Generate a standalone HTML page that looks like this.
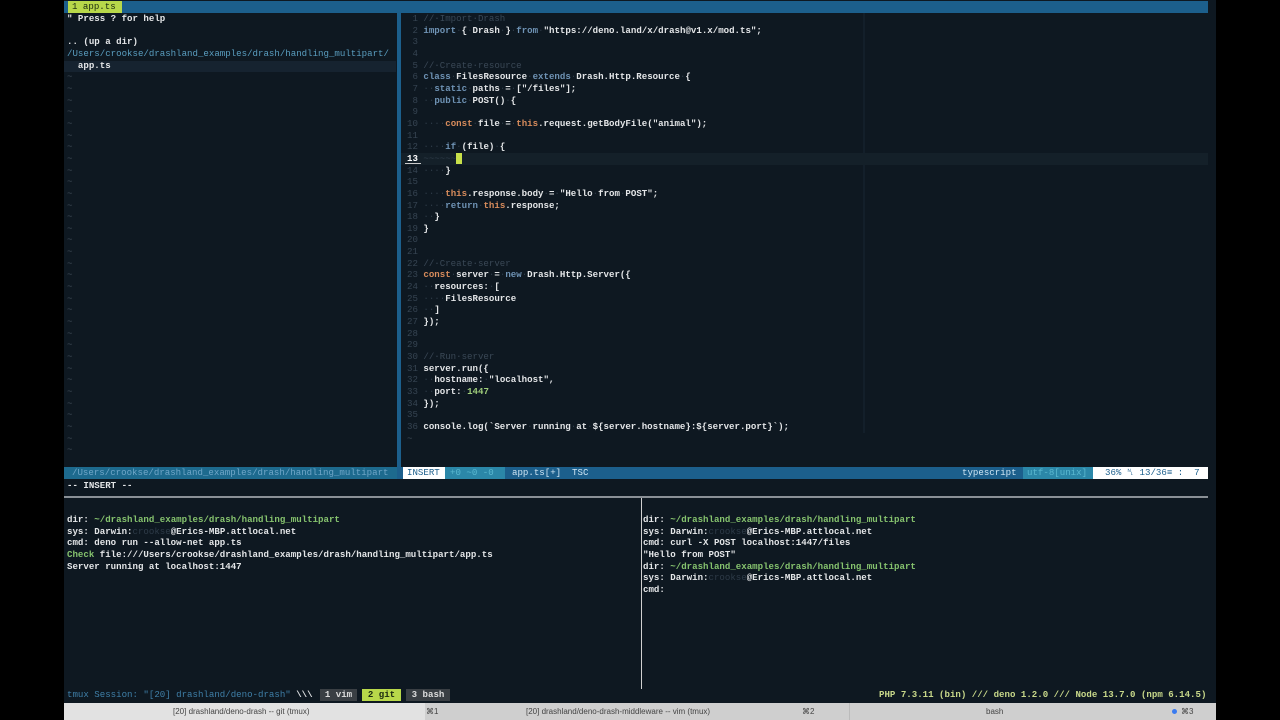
<!DOCTYPE html>
<html><head><meta charset="utf-8"><style>
body{margin:0;width:1280px;height:720px;background:#000;overflow:hidden;position:relative;font-family:"Liberation Mono",monospace;font-weight:bold;font-size:9.1px;color:#e4e6e8}
.a{position:absolute}
pre{margin:0;font:inherit;line-height:11.66px;white-space:pre;position:absolute}
.c{color:#3a4856;font-weight:normal}
.k{color:#6f93b5}
.o{color:#d88c5c}
.g{color:#9fce7b}
.n{color:#364452;font-weight:normal}
.d{color:#2e3b48;font-weight:normal}
.t{color:#3e4a55;font-weight:normal}
.gr{color:#86c36e}
.bl{color:#5a9ec0}
</style></head><body>
<div class="a" style="left:64px;top:0;width:1152px;height:703px;background:#0e1821"></div>
<!-- top bar -->
<div class="a" style="left:64px;top:1px;width:1144px;height:12px;background:#1c5f8c"></div>
<div class="a" style="left:68px;top:1px;width:54px;height:12px;background:#b8d84a;color:#1a2a10;font-weight:normal;line-height:12px;padding-left:4px;box-sizing:border-box">1 app.ts</div>
<!-- left pane -->
<div class="a" style="left:64px;top:61px;width:332px;height:11px;background:#162330"></div>
<pre style="left:67px;top:13px">" Press ? for help

.. (up a dir)
<span class="bl" style="font-weight:normal">/Users/crookse/drashland_examples/drash/handling_multipart/</span>
  app.ts
<span class="t">~
~
~
~
~
~
~
~
~
~
~
~
~
~
~
~
~
~
~
~
~
~
~
~
~
~
~
~
~
~
~
~
~</span></pre>
<!-- separator -->
<div class="a" style="left:397px;top:13px;width:4px;height:454px;background:#1c5f8c"></div>
<div class="a" style="left:863px;top:13px;width:2px;height:420px;background:#131f2a"></div>
<div class="a" style="left:401px;top:153px;width:807px;height:12px;background:#142029"></div>
<div class="a" style="left:456px;top:153px;width:6px;height:11px;background:#c8e04a"></div>
<div class="a" style="left:405px;top:163px;width:16px;height:1px;background:#ccc"></div>
<pre style="left:407px;top:13px"><span class="n"> 1</span> <span class="c">//·Import·Drash</span>
<span class="n"> 2</span> <span class="k">import</span><span class="d">·</span>{<span class="d">·</span>Drash<span class="d">·</span>}<span class="d">·</span><span class="k">from</span><span class="d">·</span>"https://deno.land/x/drash@v1.x/mod.ts";
<span class="n"> 3</span>
<span class="n"> 4</span>
<span class="n"> 5</span> <span class="c">//·Create·resource</span>
<span class="n"> 6</span> <span class="k">class</span><span class="d">·</span>FilesResource<span class="d">·</span><span class="k">extends</span><span class="d">·</span>Drash.Http.Resource<span class="d">·</span>{
<span class="n"> 7</span> <span class="d">··</span><span class="k">static</span><span class="d">·</span>paths<span class="d">·</span>=<span class="d">·</span>["/files"];
<span class="n"> 8</span> <span class="d">··</span><span class="k">public</span><span class="d">·</span>POST()<span class="d">·</span>{
<span class="n"> 9</span>
<span class="n">10</span> <span class="d">····</span><span class="o">const</span><span class="d">·</span>file<span class="d">·</span>=<span class="d">·</span><span class="o">this</span>.request.getBodyFile("animal");
<span class="n">11</span>
<span class="n">12</span> <span class="d">····</span><span class="k">if</span><span class="d">·</span>(file)<span class="d">·</span>{
<span style="color:#fff">13</span> <span class="d">~~~~~~</span>
<span class="n">14</span> <span class="d">····</span>}
<span class="n">15</span>
<span class="n">16</span> <span class="d">····</span><span class="o">this</span>.response.body<span class="d">·</span>=<span class="d">·</span>"Hello<span class="d">·</span>from<span class="d">·</span>POST";
<span class="n">17</span> <span class="d">····</span><span class="k">return</span><span class="d">·</span><span class="o">this</span>.response;
<span class="n">18</span> <span class="d">··</span>}
<span class="n">19</span> }
<span class="n">20</span>
<span class="n">21</span>
<span class="n">22</span> <span class="c">//·Create·server</span>
<span class="n">23</span> <span class="o">const</span><span class="d">·</span>server<span class="d">·</span>=<span class="d">·</span><span class="k">new</span><span class="d">·</span>Drash.Http.Server({
<span class="n">24</span> <span class="d">··</span>resources:<span class="d">·</span>[
<span class="n">25</span> <span class="d">····</span>FilesResource
<span class="n">26</span> <span class="d">··</span>]
<span class="n">27</span> });
<span class="n">28</span>
<span class="n">29</span>
<span class="n">30</span> <span class="c">//·Run·server</span>
<span class="n">31</span> server.run({
<span class="n">32</span> <span class="d">··</span>hostname:<span class="d">·</span>"localhost",
<span class="n">33</span> <span class="d">··</span>port:<span class="d">·</span><span class="g">1447</span>
<span class="n">34</span> });
<span class="n">35</span>
<span class="n">36</span> console.log(`Server<span class="d">·</span>running<span class="d">·</span>at<span class="d">·</span>${server.hostname}:${server.port}`);
<span class="t">~</span></pre>
<!-- status line -->
<div class="a" style="left:64px;top:467px;width:1144px;height:12px;background:#1c5f8c"></div>
<div class="a" style="left:64px;top:467px;width:333px;height:12px;background:#1d6a8e"></div>
<div class="a" style="left:403px;top:467px;width:42px;height:12px;background:#fff"></div>
<div class="a" style="left:445px;top:467px;width:60px;height:12px;background:#2b87a8"></div>
<div class="a" style="left:1023px;top:467px;width:70px;height:12px;background:#2b87a8"></div>
<div class="a" style="left:1093px;top:467px;width:115px;height:12px;background:#fff"></div>
<pre style="left:72px;top:467px;line-height:12px;color:#6fa6c8;font-weight:normal">/Users/crookse/drashland_examples/drash/handling_multipart</pre>
<pre style="left:407px;top:467px;line-height:12px;color:#1c5f8c;font-weight:normal">INSERT</pre>
<pre style="left:450px;top:467px;line-height:12px;color:#5ab8d0;font-weight:normal">+0 ~0 -0</pre>
<pre style="left:512px;top:467px;line-height:12px;color:#cfe6f5;font-weight:normal">app.ts[+]  TSC</pre>
<pre style="left:962px;top:467px;line-height:12px;color:#cfe6f5;font-weight:normal">typescript</pre>
<pre style="left:1027px;top:467px;line-height:12px;color:#5ab8d0;font-weight:normal">utf-8[unix]</pre>
<pre style="left:1105px;top:467px;line-height:12px;color:#1c5f8c;font-weight:normal">36% ␤ 13/36≡ :  7</pre>
<pre style="left:67px;top:480px">-- INSERT --</pre>
<div class="a" style="left:64px;top:496px;width:1144px;height:2px;background:#8a9096"></div>
<div class="a" style="left:641px;top:498px;width:1px;height:191px;background:#d0d0d0"></div>
<pre style="left:67px;top:514px">dir: <span class="gr">~/drashland_examples/drash/handling_multipart</span>
sys: Darwin:<span class="d">crookse</span>@Erics-MBP.attlocal.net
cmd: deno run --allow-net app.ts
<span class="gr">Check</span> file:///Users/crookse/drashland_examples/drash/handling_multipart/app.ts
Server running at localhost:1447</pre>
<pre style="left:643px;top:514px">dir: <span class="gr">~/drashland_examples/drash/handling_multipart</span>
sys: Darwin:<span class="d">crookse</span>@Erics-MBP.attlocal.net
cmd: curl -X POST localhost:1447/files
"Hello from POST"
dir: <span class="gr">~/drashland_examples/drash/handling_multipart</span>
sys: Darwin:<span class="d">crookse</span>@Erics-MBP.attlocal.net
cmd:</pre>
<!-- tmux -->
<pre style="left:67px;top:689px;line-height:12px;color:#3f7fa8;font-weight:normal">tmux Session: "[20] drashland/deno-drash" <b style="color:#e4e6e8">\\\</b></pre>
<div class="a" style="left:320px;top:689px;width:37px;height:12px;background:#3a3f44;color:#ddd;line-height:12px;text-align:center">1 vim</div>
<div class="a" style="left:362px;top:689px;width:39px;height:12px;background:#b8d84a;color:#1a2a10;line-height:12px;text-align:center">2 git</div>
<div class="a" style="left:406px;top:689px;width:44px;height:12px;background:#3a3f44;color:#ddd;line-height:12px;text-align:center">3 bash</div>
<pre style="left:879px;top:689px;line-height:12px;color:#c8d88a">PHP 7.3.11 (bin) /// deno 1.2.0 /// Node 13.7.0 (npm 6.14.5)</pre>
<!-- mac tabs -->
<div class="a" style="left:64px;top:703px;width:1152px;height:17px;background:#cfcfcf;font-family:'Liberation Sans',sans-serif;font-weight:normal;font-size:8px;color:#444;line-height:17px">
<div class="a" style="left:0;top:0;width:361px;height:17px;background:#e2e2e2"></div>
<div class="a" style="left:109px">[20] drashland/deno-drash -- git (tmux)</div>
<div class="a" style="left:362px">⌘1</div>
<div class="a" style="left:462px">[20] drashland/deno-drash-middleware -- vim (tmux)</div>
<div class="a" style="left:738px">⌘2</div>
<div class="a" style="left:785px;top:0;width:1px;height:17px;background:#bbb"></div>
<div class="a" style="left:922px">bash</div>
<div class="a" style="left:1108px;top:6px;width:5px;height:5px;border-radius:50%;background:#3a7bf0"></div>
<div class="a" style="left:1117px">⌘3</div>
</div>
</body></html>
